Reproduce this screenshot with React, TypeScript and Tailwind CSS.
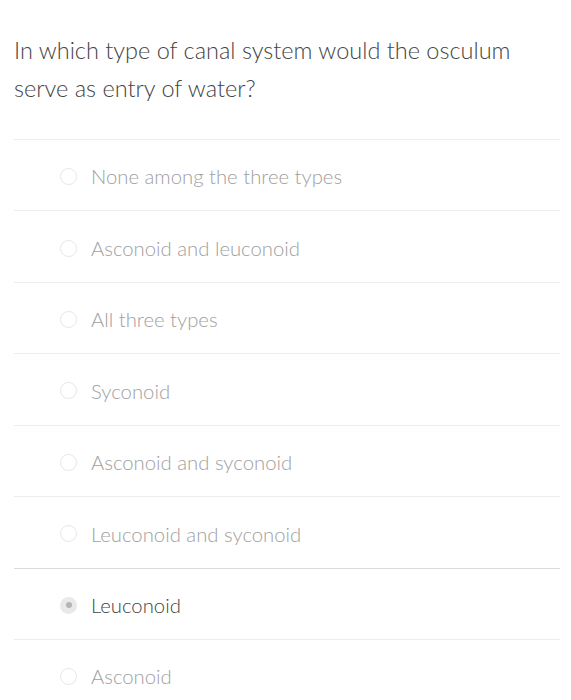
import React from "react";

const options = [
  "None among the three types",
  "Asconoid and leuconoid",
  "All three types",
  "Syconoid",
  "Asconoid and syconoid",
  "Leuconoid and syconoid",
  "Leuconoid",
  "Asconoid",
];
const selected = 6;

export default function App() {
  return (
    <div className="w-[571px] h-[700px] bg-white overflow-hidden" style={{ fontFamily: "Lato, 'Open Sans', sans-serif" }}>
      <div className="px-[14px]">
        <div className="pt-[31px] pb-[32px] text-[23.5px] leading-[38px] font-light text-[#444444] pr-[20px]">
          In which type of canal system would the osculum serve as entry of water?
        </div>
        <div className="w-[546px]">
          {options.map((o, i) => {
            const sel = i === selected;
            return (
              <div
                key={o}
                className={
                  "h-[71.43px] flex items-center pt-[3px] pl-[46px] border-t " +
                  (sel ? "border-[#dcdcdc]" : "border-[#ececec]")
                }
              >
                {sel ? (
                  <span className="w-[17px] h-[17px] rounded-full bg-[#e9e9e9] flex items-center justify-center">
                    <span className="w-[6px] h-[6px] rounded-full bg-[#b4b4b4]" />
                  </span>
                ) : (
                  <span className="w-[17px] h-[17px] rounded-full border-[1.5px] border-[#e6e6e6]" />
                )}
                <span
                  className={
                    "ml-[14px] text-[20.3px] font-light " + (sel ? "text-[#444444]" : "text-[#a0a0a0]")
                  }
                >
                  {o}
                </span>
              </div>
            );
          })}
        </div>
      </div>
    </div>
  );
}
